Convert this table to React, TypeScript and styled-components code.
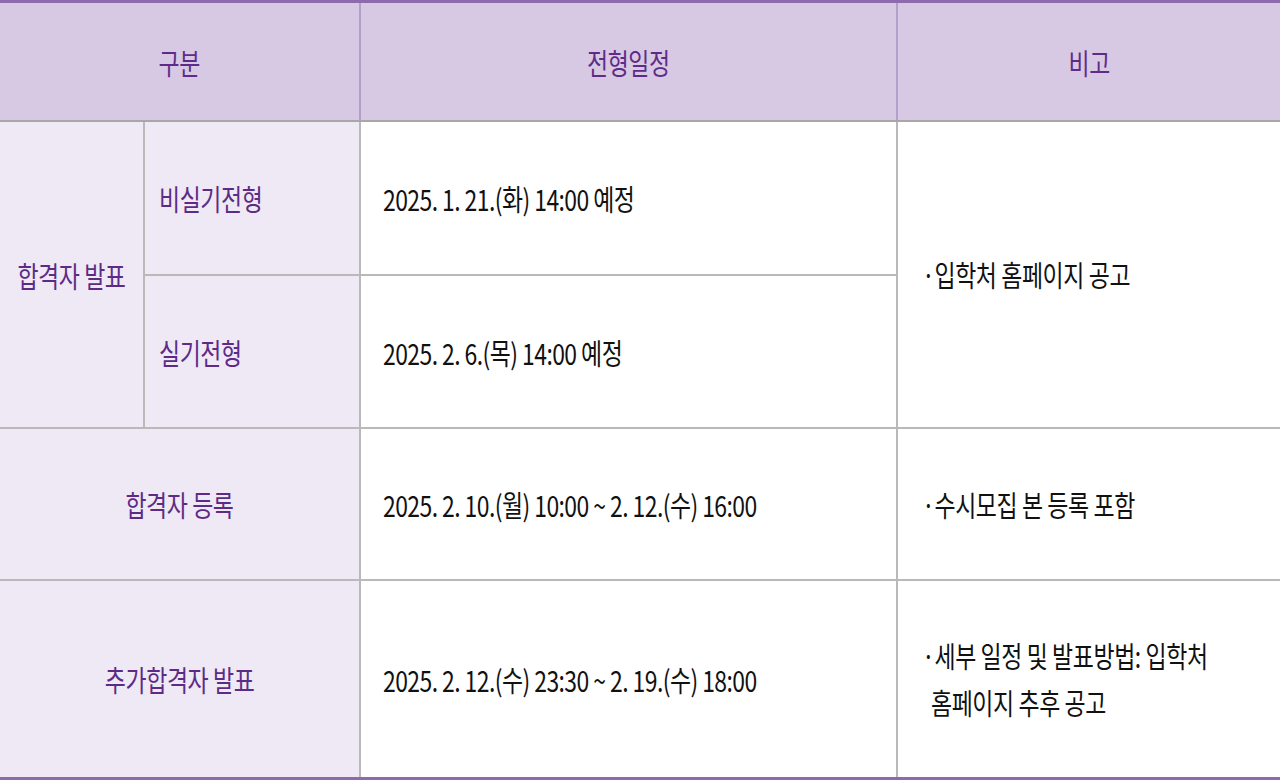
import React from "react";
import styled, { createGlobalStyle } from "styled-components";

const GlobalStyle = createGlobalStyle`
  html, body {
    margin: 0;
    padding: 0;
    background: #ffffff;
  }
  body {
    font-family: "Noto Sans CJK KR", "Noto Sans", sans-serif;
  }
`;

type Row = {
  label: string;
  sub?: { name: string; date: string; height: number }[];
  date?: string;
  note?: string[];
  height: number;
};

const rows: Row[] = [
  {
    label: "합격자 발표",
    sub: [
      { name: "비실기전형", date: "2025. 1. 21.(화) 14:00 예정", height: 154 },
      { name: "실기전형", date: "2025. 2. 6.(목) 14:00 예정", height: 153 },
    ],
    note: ["·입학처 홈페이지 공고"],
    height: 0,
  },
  {
    label: "합격자 등록",
    date: "2025. 2. 10.(월) 10:00 ~ 2. 12.(수) 16:00",
    note: ["·수시모집 본 등록 포함"],
    height: 152,
  },
  {
    label: "추가합격자 발표",
    date: "2025. 2. 12.(수) 23:30 ~ 2. 19.(수) 18:00",
    note: ["·세부 일정 및 발표방법: 입학처", "홈페이지 추후 공고"],
    height: 198,
  },
];

export default function App() {
  return (
    <>
      <GlobalStyle />
      <Table>
        <colgroup>
          <col style={{ width: 144 }} />
          <col style={{ width: 216 }} />
          <col style={{ width: 537 }} />
          <col />
        </colgroup>
        <thead>
          <tr>
            <HeadCell colSpan={2}>
              <Squeeze $origin="center">구분</Squeeze>
            </HeadCell>
            <HeadCell>
              <Squeeze $origin="center">전형일정</Squeeze>
            </HeadCell>
            <HeadCell>
              <Squeeze $origin="center">비고</Squeeze>
            </HeadCell>
          </tr>
        </thead>
        <tbody>
          {rows.map((row) =>
            row.sub ? (
              row.sub.map((s, i) => (
                <tr key={s.name} style={{ height: s.height }}>
                  {i === 0 && (
                    <LabelCell rowSpan={row.sub!.length} $align="center">
                      <Squeeze $origin="center">{row.label}</Squeeze>
                    </LabelCell>
                  )}
                  <LabelCell $align="left">
                    <Squeeze $origin="left">{s.name}</Squeeze>
                  </LabelCell>
                  <DateCell>
                    <Squeeze $origin="left">{s.date}</Squeeze>
                  </DateCell>
                  {i === 0 && (
                    <NoteCell rowSpan={row.sub!.length}>
                      {row.note?.map((n, j) => (
                        <NoteLine key={n} $indent={j > 0}>
                          <Squeeze $origin="left">{n}</Squeeze>
                        </NoteLine>
                      ))}
                    </NoteCell>
                  )}
                </tr>
              ))
            ) : (
              <tr key={row.label} style={{ height: row.height }}>
                <LabelCell colSpan={2} $align="center">
                  <Squeeze $origin="center">{row.label}</Squeeze>
                </LabelCell>
                <DateCell>
                  <Squeeze $origin="left">{row.date}</Squeeze>
                </DateCell>
                <NoteCell>
                  {row.note?.map((n, j) => (
                    <NoteLine key={n} $indent={j > 0}>
                      <Squeeze $origin="left">{n}</Squeeze>
                    </NoteLine>
                  ))}
                </NoteCell>
              </tr>
            )
          )}
        </tbody>
      </Table>
    </>
  );
}

const Table = styled.table`
  width: 1280px;
  border-collapse: collapse;
  table-layout: fixed;
  border-top: 3px solid #8c6aab;
  border-bottom: 3px solid #8c6aab;
  font-size: 29px;
  letter-spacing: -0.5px;
`;

const HeadCell = styled.th`
  height: 117px;
  padding: 0;
  background: #d7c9e3;
  color: #5e2c88;
  font-weight: 400;
  text-align: center;
  vertical-align: middle;
  border-left: 2px solid #b49fcb;
  border-bottom: 2px solid #a8a8a8;

  &:first-child {
    border-left: none;
  }
`;

const LabelCell = styled.td<{ $align: "left" | "center" }>`
  padding: ${({ $align }) => ($align === "left" ? "0 0 0 14px" : "0")};
  background: #efe8f5;
  color: #5c2b86;
  text-align: ${({ $align }) => $align};
  vertical-align: middle;
  border: 2px solid #b9b9b9;
  border-top: none;

  &:first-child {
    border-left: none;
  }
`;

const DateCell = styled.td`
  padding: 0 0 0 22px;
  color: #111111;
  text-align: left;
  vertical-align: middle;
  border: 2px solid #b9b9b9;
  border-top: none;
  white-space: nowrap;
  letter-spacing: -0.7px;
`;

const NoteCell = styled.td`
  padding: 0 0 0 24px;
  color: #111111;
  vertical-align: middle;
  border-bottom: 2px solid #b9b9b9;
  border-right: none;
`;

const NoteLine = styled.div<{ $indent: boolean }>`
  line-height: 47px;
  white-space: nowrap;
  padding-left: ${({ $indent }) => ($indent ? "9px" : "0")};
`;

const Squeeze = styled.span<{ $origin: "left" | "center" }>`
  display: inline-block;
  transform: scaleX(0.79);
  transform-origin: ${({ $origin }) => $origin} center;
  white-space: nowrap;
`;
